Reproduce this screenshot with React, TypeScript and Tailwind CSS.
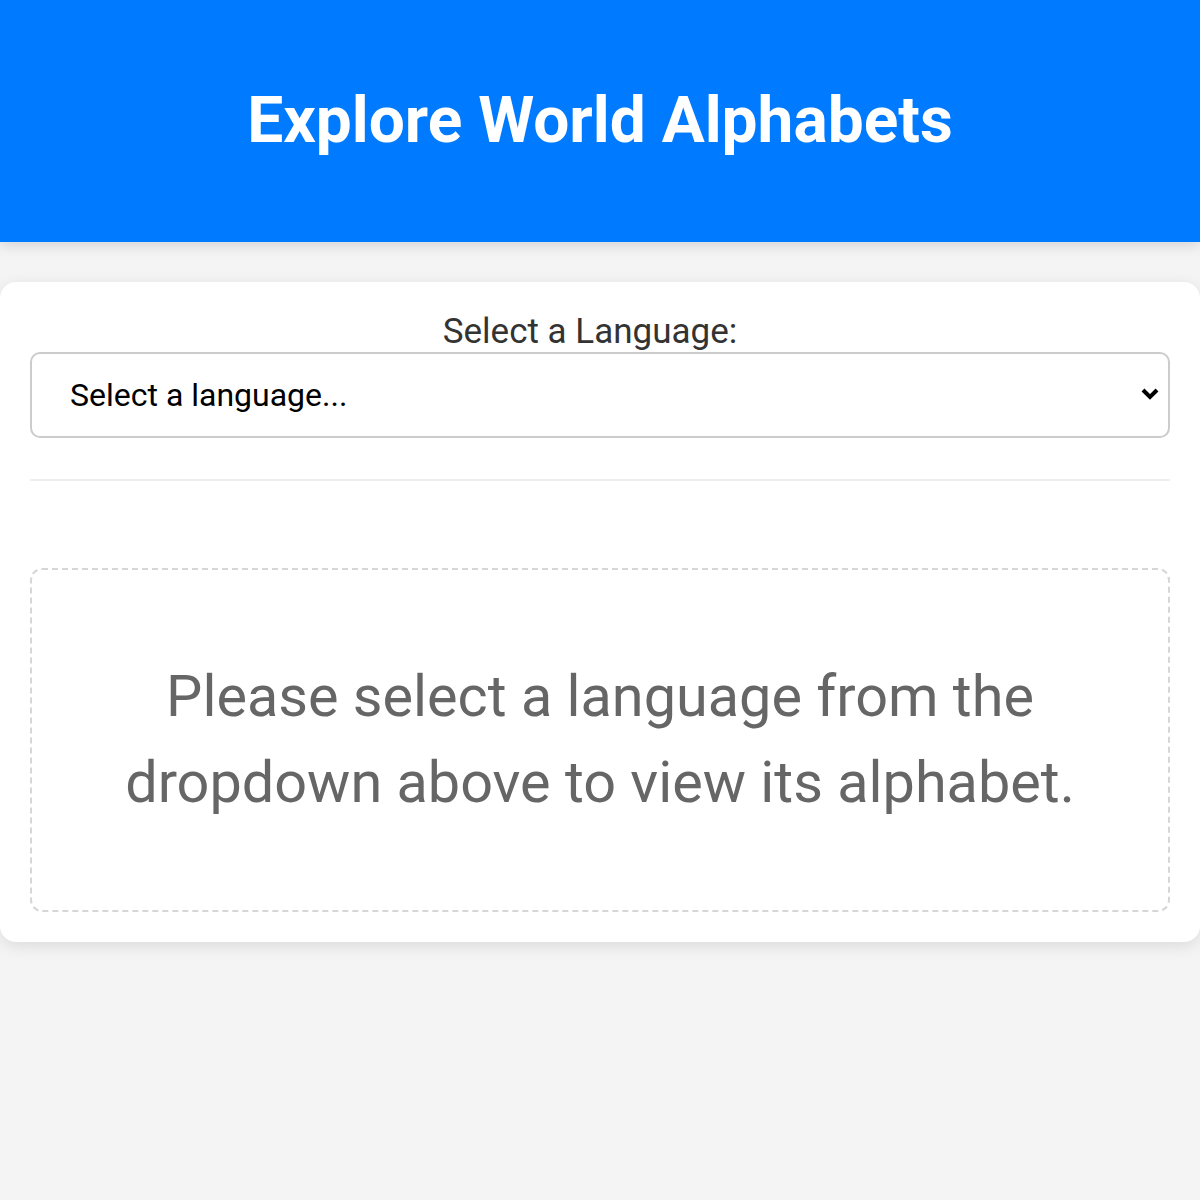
export default function App() {
  return (
    <div className="min-h-[1200px] bg-[#f4f4f4] font-['Roboto',sans-serif]">
      {/* Header */}
      <header className="h-[242px] bg-[#007bff] flex items-center justify-center shadow-[0_4px_12px_rgba(0,0,0,0.12)]">
        <h1 className="text-white font-bold text-[64px] leading-none">Explore World Alphabets</h1>
      </header>

      {/* Card */}
      <main className="mt-[40px] bg-white rounded-[16px] shadow-[0_4px_16px_rgba(0,0,0,0.1)] px-[30px] pt-[30px] pb-[30px]">
        <label className="block text-center text-[#333] text-[35px] leading-[40px] pr-[20px]">Select a Language:</label>
        <div className="relative">
          <select className="appearance-none w-full h-[86px] border-2 border-[#ccc] rounded-[10px] pl-[38px] pr-[60px] text-[32px] text-black bg-white outline-none">
            <option>Select a language...</option>
          </select>
          <svg className="absolute right-[10px] top-[35px] pointer-events-none" width="20" height="14" viewBox="0 0 20 14">
            <path d="M3 3 L10 10 L17 3" fill="none" stroke="black" strokeWidth="4" />
          </svg>
        </div>

        <hr className="mt-[41px] border-0 h-[2px] bg-[#eee]" />

        <div className="mt-[87px] border-2 border-dashed border-[#d6d6d6] rounded-[12px] py-[84px] px-[40px] text-center text-[#666] text-[57.6px] leading-[86px]">
          Please select a language from the dropdown above to view its alphabet.
        </div>
      </main>
    </div>
  );
}
